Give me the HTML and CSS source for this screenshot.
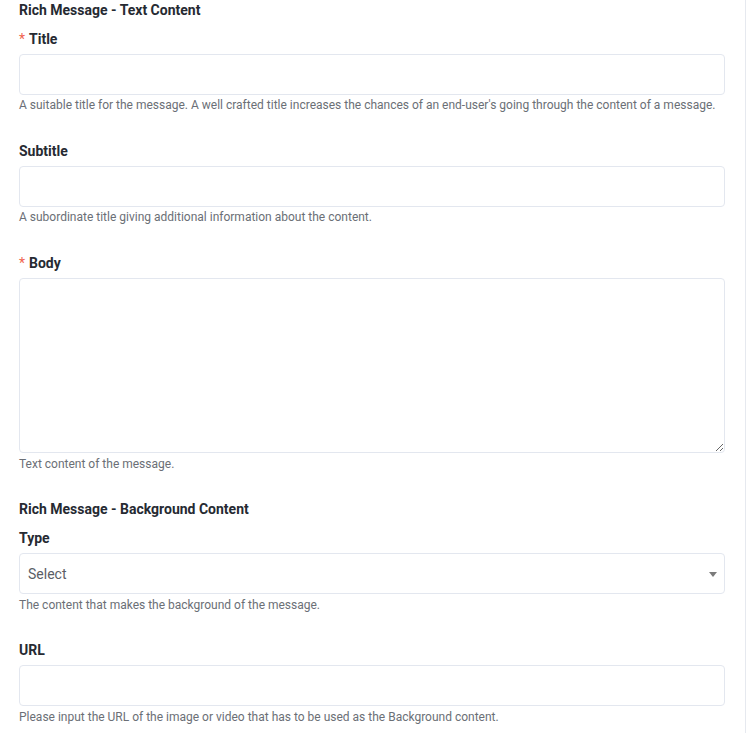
FILE: index.html
```html
<!DOCTYPE html>
<html lang="en">
<head>
<meta charset="utf-8">
<title>Rich Message</title>
<link rel="stylesheet" href="styles.css">
</head>
<body>
<div class="page">
  <h3 class="section-title">Rich Message - Text Content</h3>
  <div class="field">
    <label class="label"><span class="req">*</span>Title</label>
    <input class="input" type="text">
    <div class="help">A suitable title for the message. A well crafted title increases the chances of an end-user's going through the content of a message.</div>
  </div>
  <div class="field">
    <label class="label">Subtitle</label>
    <input class="input" type="text">
    <div class="help">A subordinate title giving additional information about the content.</div>
  </div>
  <div class="field">
    <label class="label"><span class="req">*</span>Body</label>
    <textarea class="textarea"></textarea>
    <div class="help help-ta">Text content of the message.</div>
  </div>
  <h3 class="section-title section-second">Rich Message - Background Content</h3>
  <div class="field field-tight">
    <label class="label">Type</label>
    <div class="select">
      <span class="select-text">Select</span>
      <span class="caret"></span>
    </div>
    <div class="help help-sel">The content that makes the background of the message.</div>
  </div>
  <div class="field">
    <label class="label">URL</label>
    <input class="input" type="text">
    <div class="help help-sel">Please input the URL of the image or video that has to be used as the Background content.</div>
  </div>
</div>
</body>
</html>
```
FILE: styles.css
```css
html, body {
  margin: 0;
  padding: 0;
  background: #ffffff;
}
body {
  font-family: Roboto, "Liberation Sans", Arial, sans-serif;
  color: #262a32;
}
.page {
  width: 746px;
  min-height: 733px;
  box-sizing: border-box;
  padding: 0 20px 0 19px;
  border-right: 1px solid #e6e9ef;
}
.section-title {
  margin: 0 0 9px;
  font-size: 14px;
  line-height: 20px;
  font-weight: 700;
  color: #262a32;
}
.section-second {
  margin-top: -1px;
}
.field {
  margin-bottom: 28px;
}
.field-tight {
  margin-bottom: 27px;
}
.label {
  display: block;
  font-size: 14px;
  line-height: 20px;
  font-weight: 700;
  color: #262a32;
  margin-bottom: 5px;
}
.req {
  color: #f0644f;
  margin-right: 4px;
  font-weight: 400;
}
.input, .textarea, .select {
  display: block;
  width: 100%;
  box-sizing: border-box;
  border: 1px solid #e3e7ef;
  border-radius: 4px;
  background: #fff;
  font-family: inherit;
  font-size: 14px;
  margin: 0;
  outline: none;
}
.input {
  height: 41px;
  padding: 0 8px;
}
.textarea {
  height: 175px;
  resize: vertical;
  padding: 8px;
}
.select {
  height: 41px;
  padding: 0 7px 0 8px;
  display: flex;
  align-items: center;
  justify-content: space-between;
}
.select-text {
  color: #5a5e66;
  font-size: 14px;
}
.caret {
  width: 0;
  height: 0;
  border-left: 4px solid transparent;
  border-right: 4px solid transparent;
  border-top: 5px solid #7b7b7b;
  margin-top: 2px;
}
.help {
  margin-top: 2px;
  font-size: 12px;
  line-height: 16px;
  color: #6b6f76;
}
.help-ta {
  margin-top: 3px;
}
.help-sel {
  margin-top: 3px;
}
```
